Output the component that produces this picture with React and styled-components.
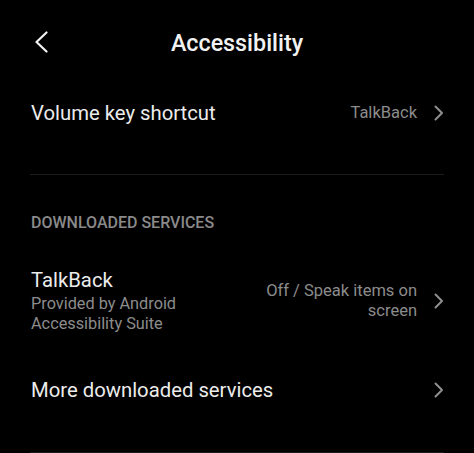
import React from 'react';
import styled, { createGlobalStyle } from 'styled-components';

const GlobalStyle = createGlobalStyle`
  html, body {
    margin: 0;
    padding: 0;
    background: #000;
  }
  body {
    font-family: Roboto, "Noto Sans", "Liberation Sans", sans-serif;
    -webkit-font-smoothing: antialiased;
  }
`;

const Screen = styled.main`
  width: 474px;
  height: 453px;
  overflow: hidden;
  background: #000;
  color: #ececec;
`;

const Header = styled.header`
  position: relative;
  height: 86px;
  display: flex;
  align-items: center;
  justify-content: center;
  .back {
    position: absolute;
    left: 35px;
    top: 31px;
  }
  h1 {
    margin: 0;
    font-size: 23.3px;
    font-weight: 500;
    color: #f2f2f2;
  }
`;

const Row = styled.div`
  display: flex;
  align-items: center;
  justify-content: space-between;
  padding: 0 30px 0 31px;
  min-height: ${props => props.height || 24}px;
  margin-top: ${props => props.top || 0}px;
`;

const Main = styled.div`
  display: flex;
  flex-direction: column;
  max-width: ${props => props.narrow ? '190px' : 'none'};
  .title {
    font-size: 20.3px;
    line-height: 24px;
    color: #ececec;
  }
  .sub {
    margin-top: 2px;
    font-size: 16.3px;
    line-height: 20px;
    color: #8c8c8c;
  }
`;

const Side = styled.div`
  display: flex;
  align-items: center;
  gap: 17px;
  .value {
    width: ${props => props.wide ? '165px' : 'auto'};
    text-align: right;
    font-size: 16.5px;
    line-height: 20px;
    color: #8c8c8c;
  }
`;

const Divider = styled.hr`
  border: 0;
  height: 1px;
  background: #1c1c1c;
  margin: ${props => props.top}px 30px 0;
`;

const SectionTitle = styled.div`
  padding: 38px 31px 0;
  font-size: 16px;
  line-height: 20px;
  font-weight: 500;
  color: #8a8a8a;
`;

const Chevron = () => (
  <svg width="10" height="16" viewBox="0 0 10 16">
    <polyline points="1.5,1.5 8,8 1.5,14.5" fill="none" stroke="#8f8f8f" strokeWidth="2" strokeLinecap="round" strokeLinejoin="round" />
  </svg>
);

const BackIcon = () => (
  <svg className="back" width="13" height="22" viewBox="0 0 13 22">
    <polyline points="11.5,1.5 1.5,11 11.5,20.5" fill="none" stroke="#f2f2f2" strokeWidth="2.2" strokeLinecap="round" strokeLinejoin="round" />
  </svg>
);

export default function App() {
  return (
    <Screen>
      <GlobalStyle />
      <Header>
        <BackIcon />
        <h1>Accessibility</h1>
      </Header>

      <Row height={54}>
        <Main><span className="title">Volume key shortcut</span></Main>
        <Side>
          <span className="value">TalkBack</span>
          <Chevron />
        </Side>
      </Row>

      <Divider top={34} />

      <SectionTitle>DOWNLOADED SERVICES</SectionTitle>

      <Row top={35}>
        <Main narrow>
          <span className="title">TalkBack</span>
          <span className="sub">Provided by Android Accessibility Suite</span>
        </Main>
        <Side wide>
          <span className="value">Off / Speak items on screen</span>
          <Chevron />
        </Side>
      </Row>

      <Row top={44}>
        <Main><span className="title">More downloaded services</span></Main>
        <Side>
          <Chevron />
        </Side>
      </Row>

      <Divider top={50} />
    </Screen>
  );
}
